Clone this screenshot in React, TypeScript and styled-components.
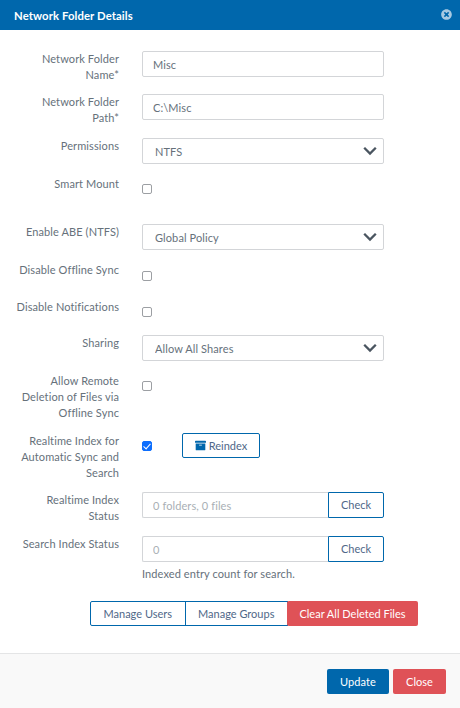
import styled, { createGlobalStyle } from "styled-components";
import { FaArchive, FaTimesCircle } from "react-icons/fa";

const GlobalStyle = createGlobalStyle`
  html, body {
    margin: 0;
    padding: 0;
    background: #fff;
  }

  body {
    font-family: Lato, "Open Sans", sans-serif;
    font-size: 11px;
    letter-spacing: 0.1px;
    color: #66717b;
  }

  * {
    box-sizing: border-box;
  }
`;

const Modal = styled.div`
  width: 460px;
  height: 708px;
  display: flex;
  flex-direction: column;
  background: #fff;
`;

const Header = styled.div`
  height: 30px;
  flex: none;
  display: flex;
  align-items: center;
  justify-content: space-between;
  padding: 1px 8px 0 14px;
  background: #0067ac;
  color: #fff;
  font-size: 11.3px;
  font-weight: 700;
`;

const CloseIcon = styled(FaTimesCircle)`
  width: 11px;
  height: 11px;
  margin-top: -2px;
  color: #a8c9e2;
`;

const Body = styled.div`
  flex: 1;
  padding-top: 21px;
`;

const Row = styled.div<{ $h: number }>`
  height: ${(p) => p.$h}px;
  display: grid;
  grid-template-columns: 119px 242px;
  column-gap: 23px;
  align-items: start;
`;

const Label = styled.div`
  padding-left: 15px;
  text-align: right;
  line-height: 16px;
`;

const TextInput = styled.input`
  display: block;
  flex: 1;
  min-width: 0;
  width: 100%;
  height: 26px;
  padding: 0 10px;
  border: 1px solid #d3d5d8;
  border-radius: 2px;
  background: #fff;
  font: inherit;
  letter-spacing: inherit;
  color: #66717b;
  outline: none;

  &::placeholder {
    color: #a9afb5;
  }
`;

const SelectWrap = styled.div`
  position: relative;
  height: 26px;

  svg {
    position: absolute;
    top: 7px;
    right: 7px;
    pointer-events: none;
  }
`;

const Select = styled.select`
  display: block;
  width: 100%;
  height: 100%;
  padding: 0 12px;
  border: 1px solid #d3d5d8;
  border-radius: 2px;
  background: #fff;
  font: inherit;
  letter-spacing: inherit;
  color: #66717b;
  appearance: none;
  outline: none;
`;

const Check = styled.input.attrs({ type: "checkbox" })<{ $top?: number }>`
  position: relative;
  display: block;
  width: 10px;
  height: 10px;
  margin: ${(p) => p.$top ?? 0}px 0 0 0;
  border: 1px solid #9c9fa3;
  border-radius: 2px;
  background: #fff;
  appearance: none;

  &:checked {
    border-color: #0d6efd;
    background: #0d6efd;
  }

  &:checked::after {
    content: "";
    position: absolute;
    top: 0;
    left: 2px;
    width: 3px;
    height: 6px;
    border: solid #fff;
    border-width: 0 1.5px 1.5px 0;
    transform: rotate(42deg);
  }
`;

const CheckLine = styled.div`
  display: flex;
  align-items: flex-start;
  gap: 30px;
`;

const OutlineButton = styled.button`
  height: 25px;
  padding: 0 12.5px;
  display: inline-flex;
  align-items: center;
  justify-content: center;
  gap: 4px;
  border: 1px solid #0067ac;
  border-radius: 2px;
  background: #fff;
  font: inherit;
  letter-spacing: 0;
  color: #4f6788;
`;

const ReindexButton = styled(OutlineButton)`
  width: 78px;
  padding: 0;
  gap: 3px;
`;

const ReindexIcon = styled(FaArchive)`
  width: 11px;
  height: 11px;
  color: #0067ac;
`;

const InputGroup = styled.div`
  display: flex;
  height: 26px;

  ${TextInput} {
    border-right: none;
    border-radius: 2px 0 0 2px;
  }

  ${OutlineButton} {
    flex: none;
    width: 56px;
    height: 26px;
    padding: 0 0 2px;
    border-radius: 0 2px 2px 0;
  }
`;

const Help = styled.div`
  margin-top: 4px;
  line-height: 16px;
`;

const ActionGroup = styled.div`
  display: flex;
  height: 25px;
  margin: 19px 0 0 90px;

  ${OutlineButton} {
    border-radius: 0;
    margin-right: -1px;
  }

  ${OutlineButton}:first-child {
    border-radius: 2px 0 0 2px;
  }
`;

const DangerButton = styled.button`
  height: 25px;
  padding: 0 12.5px;
  border: none;
  border-radius: 2px;
  background: #df5257;
  color: #fff;
  font: inherit;
  letter-spacing: 0;
`;

const Footer = styled.div`
  height: 55px;
  flex: none;
  display: flex;
  align-items: flex-start;
  justify-content: flex-end;
  gap: 4px;
  padding: 15px 14px 0 0;
  border-top: 1px solid #e4e5e6;
  background: #f9f9f9;
`;

const PrimaryButton = styled.button`
  height: 25px;
  width: 62px;
  border: none;
  border-radius: 2px;
  background: #0067ac;
  color: #fff;
  font: inherit;
  letter-spacing: inherit;
`;

const FooterDanger = styled(DangerButton)`
  width: 53px;
  padding: 0;
`;

function Chevron() {
  return (
    <svg width="14" height="12" viewBox="0 0 14 12" fill="none">
      <path d="M1.2 2.8 L7 8.6 L12.8 2.8" stroke="#4a5560" strokeWidth="2.3" />
    </svg>
  );
}

function SelectField({ value }: { value: string }) {
  return (
    <SelectWrap>
      <Select defaultValue={value}>
        <option>{value}</option>
      </Select>
      <Chevron />
    </SelectWrap>
  );
}

export default function App() {
  return (
    <Modal>
      <GlobalStyle />
      <Header>
        <span>Network Folder Details</span>
        <CloseIcon />
      </Header>

      <Body>
        <Row $h={43}>
          <Label>Network Folder Name*</Label>
          <TextInput defaultValue="Misc" />
        </Row>
        <Row $h={44}>
          <Label>Network Folder Path*</Label>
          <TextInput defaultValue="C:\Misc" />
        </Row>
        <Row $h={38}>
          <Label>Permissions</Label>
          <SelectField value="NTFS" />
        </Row>
        <Row $h={48}>
          <Label>Smart Mount</Label>
          <Check $top={8} />
        </Row>
        <Row $h={38}>
          <Label>Enable ABE (NTFS)</Label>
          <SelectField value="Global Policy" />
        </Row>
        <Row $h={37}>
          <Label>Disable Offline Sync</Label>
          <Check $top={9} />
        </Row>
        <Row $h={36}>
          <Label>Disable Notifications</Label>
          <Check $top={8} />
        </Row>
        <Row $h={38}>
          <Label>Sharing</Label>
          <SelectField value="Allow All Shares" />
        </Row>
        <Row $h={60}>
          <Label>Allow Remote Deletion of Files via Offline Sync</Label>
          <Check $top={8} />
        </Row>
        <Row $h={59}>
          <Label>Realtime Index for Automatic Sync and Search</Label>
          <CheckLine>
            <Check $top={8} defaultChecked />
            <ReindexButton>
              <ReindexIcon />
              Reindex
            </ReindexButton>
          </CheckLine>
        </Row>
        <Row $h={44}>
          <Label>Realtime Index Status</Label>
          <InputGroup>
            <TextInput placeholder="0 folders, 0 files" />
            <OutlineButton>Check</OutlineButton>
          </InputGroup>
        </Row>
        <Row $h={26}>
          <Label>Search Index Status</Label>
          <InputGroup>
            <TextInput placeholder="0" />
            <OutlineButton>Check</OutlineButton>
          </InputGroup>
        </Row>
        <Row $h={20}>
          <span />
          <Help>Indexed entry count for search.</Help>
        </Row>

        <ActionGroup>
          <OutlineButton>Manage Users</OutlineButton>
          <OutlineButton>Manage Groups</OutlineButton>
          <DangerButton>Clear All Deleted Files</DangerButton>
        </ActionGroup>
      </Body>

      <Footer>
        <PrimaryButton>Update</PrimaryButton>
        <FooterDanger>Close</FooterDanger>
      </Footer>
    </Modal>
  );
}
